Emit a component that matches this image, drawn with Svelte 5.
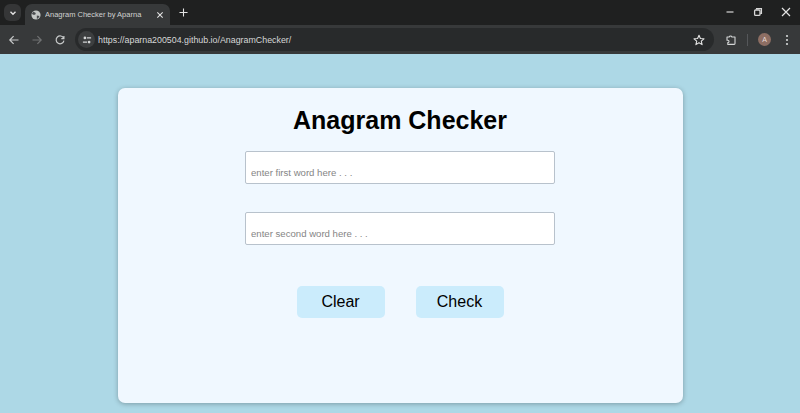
<script lang="ts">
  let first = $state('');
  let second = $state('');

  function clear() {
    first = '';
    second = '';
  }
</script>

<div class="window">
  <div class="tabstrip">
    <div class="tabsearch">
      <svg width="10" height="10" viewBox="0 0 10 10"><path d="M2.5 3.8 5 6.3l2.5-2.5" fill="none" stroke="#e3e3e3" stroke-width="1.4"/></svg>
    </div>
    <div class="tab">
      <svg class="globe" width="10" height="10" viewBox="0 0 12 12">
        <circle cx="6" cy="6" r="5.5" fill="#c4c7c5"/>
        <path d="M3 2.2 5.8 3.6 5 5.6 2.6 5.8 1 4.4ZM7 6.6l3.2.6-1.6 3-1.6.4Z" fill="#4a4c4f"/>
      </svg>
      <span class="tabtitle">Anagram Checker by Aparna</span>
      <svg class="tabclose" width="8" height="8" viewBox="0 0 9 9"><path d="M1.5 1.5l6 6M7.5 1.5l-6 6" stroke="#e3e3e3" stroke-width="1.2"/></svg>
    </div>
    <svg class="newtab" width="9" height="9" viewBox="0 0 10 10"><path d="M5 .5v9M.5 5h9" stroke="#e3e3e3" stroke-width="1.2"/></svg>
    <div class="winctl">
      <svg width="10" height="10" viewBox="0 0 10 10"><path d="M1.5 5h7" stroke="#d8d8d8" stroke-width="1.2"/></svg>
      <svg width="10" height="10" viewBox="0 0 10 10"><path d="M3.6 2.4V1.6h4.8v4.8H7.2" fill="none" stroke="#d8d8d8" stroke-width="1.3"/><rect x="1.6" y="3" width="5.4" height="5.4" rx="1" fill="none" stroke="#d8d8d8" stroke-width="1.3"/></svg>
      <svg width="10" height="10" viewBox="0 0 10 10"><path d="M1 1l8 8M9 1l-8 8" stroke="#e3e3e3" stroke-width="1.2"/></svg>
    </div>
  </div>

  <div class="toolbar">
    <svg class="nav" width="12" height="12" viewBox="0 0 12 12"><path d="M10.5 6H2M5.6 2.2 1.8 6l3.8 3.8" fill="none" stroke="#c8caca" stroke-width="1.2"/></svg>
    <svg class="nav" width="12" height="12" viewBox="0 0 12 12"><path d="M1.5 6H10M6.4 2.2 10.2 6 6.4 9.8" fill="none" stroke="#707273" stroke-width="1.2"/></svg>
    <svg class="nav" width="12" height="12" viewBox="0 0 12 12"><path d="M9.6 4.2A3.9 3.9 0 1 0 9.9 6.6M9.9 2V4.6H7.3" fill="none" stroke="#c8caca" stroke-width="1.2"/></svg>
    <div class="omnibox">
      <div class="siteinfo">
        <svg width="10" height="10" viewBox="0 0 11 11"><path d="M5.4 3.2H10M1 7.8h4.6" stroke="#d4d6d6" stroke-width="1.2"/><circle cx="3.2" cy="3.2" r="1.5" fill="#d4d6d6"/><circle cx="7.8" cy="7.8" r="1.5" fill="#d4d6d6"/></svg>
      </div>
      <span class="url">https://aparna200504.github.io/AnagramChecker/</span>
      <svg class="star" width="12" height="12" viewBox="0 0 12 12"><path d="M6 1.2 7.4 4.5l3.6.3-2.7 2.3.8 3.5L6 8.7l-3.1 1.9.8-3.5L1 4.8l3.6-.3Z" fill="none" stroke="#e3e3e3" stroke-width="1.1" stroke-linejoin="round"/></svg>
    </div>
    <svg class="ext" width="12" height="12" viewBox="0 0 12 12"><path d="M2 3h2.2a1.4 1.4 0 0 1 2.7 0H10v6.6a.8.8 0 0 1-.8.8H2.8V8.6a1.2 1.2 0 0 0 0-2.4H2Z" fill="none" stroke="#d4d6d6" stroke-width="1.1" stroke-linejoin="round"/></svg>
    <div class="divider"></div>
    <div class="avatar">A</div>
    <svg class="menu" width="4" height="12" viewBox="0 0 4 12"><circle cx="2" cy="2" r="1.1" fill="#d4d6d6"/><circle cx="2" cy="6" r="1.1" fill="#d4d6d6"/><circle cx="2" cy="10" r="1.1" fill="#d4d6d6"/></svg>
  </div>

  <main class="page">
    <section class="card">
      <h1>Anagram Checker</h1>
      <input type="text" placeholder="enter first word here . . ." bind:value={first} />
      <input type="text" placeholder="enter second word here . . ." bind:value={second} />
      <div class="buttons">
        <button onclick={clear}>Clear</button>
        <button>Check</button>
      </div>
    </section>
  </main>
</div>

<style>
  :global(body) {
    margin: 0;
    background: #add8e6;
  }

  .window {
    width: 800px;
    height: 413px;
    display: flex;
    flex-direction: column;
    overflow: hidden;
    font-family: "Liberation Sans", Arial, sans-serif;
  }

  /* Browser chrome */
  .tabstrip {
    height: 25px;
    flex: none;
    display: flex;
    align-items: flex-end;
    background: #1f2020;
    padding-left: 4px;
    box-sizing: border-box;
  }

  .tabsearch {
    width: 17px;
    height: 17px;
    margin-bottom: 4px;
    border-radius: 6px;
    background: #353637;
    display: flex;
    align-items: center;
    justify-content: center;
  }

  .tab {
    width: 145px;
    height: 21px;
    margin-left: 4px;
    padding: 0 6px 0 6px;
    box-sizing: border-box;
    display: flex;
    align-items: center;
    background: #37393a;
    border-radius: 7px 7px 0 0;
  }

  .globe {
    flex: none;
  }

  .tabtitle {
    margin-left: 4px;
    flex: 1;
    font-size: 7.5px;
    color: #d0d1d1;
    white-space: nowrap;
    overflow: hidden;
  }

  .newtab {
    margin: 0 0 8px 9px;
  }

  .winctl {
    margin-left: auto;
    display: flex;
    gap: 18px;
    padding-right: 9px;
    margin-bottom: 8px;
  }

  .toolbar {
    height: 29px;
    flex: none;
    display: flex;
    align-items: center;
    background: #37393a;
    padding: 0 11px 0 8px;
    box-sizing: border-box;
  }

  .nav {
    margin-right: 11px;
  }

  .nav:nth-child(3) {
    margin-right: 9px;
  }

  .omnibox {
    width: 639px;
    height: 23px;
    border-radius: 12px;
    background: #282a2b;
    display: flex;
    align-items: center;
    padding: 0 9px 0 3px;
    box-sizing: border-box;
  }

  .siteinfo {
    width: 17px;
    height: 17px;
    border-radius: 50%;
    background: #3d3f40;
    display: flex;
    align-items: center;
    justify-content: center;
  }

  .url {
    margin-left: 3px;
    font-size: 8.85px;
    color: #d6d7d7;
  }

  .star {
    margin-left: auto;
  }

  .ext {
    margin-left: 11px;
  }

  .divider {
    width: 1px;
    height: 12px;
    background: #55575a;
    margin-left: 10px;
  }

  .avatar {
    width: 13px;
    height: 13px;
    border-radius: 50%;
    background: #8d6e63;
    color: #e8dcd8;
    font-size: 7px;
    display: flex;
    align-items: center;
    justify-content: center;
    margin-left: 10px;
  }

  .menu {
    margin-left: 14px;
  }

  /* Page content */
  .page {
    flex: 1;
    background: #add8e6;
    display: flex;
    justify-content: center;
    padding-top: 34px;
    box-sizing: border-box;
    min-height: 0;
  }

  .card {
    width: 565px;
    height: 315px;
    border-radius: 7px;
    background: #f0f8ff;
    box-shadow: 0 1px 5px rgba(0, 0, 0, 0.28);
    display: flex;
    flex-direction: column;
    align-items: center;
    box-sizing: border-box;
    padding-top: 17px;
  }

  h1 {
    margin: 0;
    font-size: 25px;
    line-height: 31px;
    font-weight: 700;
    color: #000;
  }

  input {
    width: 310px;
    height: 33px;
    box-sizing: border-box;
    margin-top: 15px;
    padding: 10px 5px 0;
    border: 1px solid #b8c2cc;
    border-radius: 2px;
    background: #fff;
    font-family: inherit;
    font-size: 9.6px;
    outline: none;
  }

  input + input {
    margin-top: 28px;
  }

  input::placeholder {
    color: #858585;
    opacity: 1;
  }

  .buttons {
    display: flex;
    gap: 31px;
    margin-top: 41px;
  }

  button {
    width: 88px;
    height: 32px;
    border: none;
    border-radius: 5px;
    background: #cbecfc;
    color: #000;
    font-family: inherit;
    font-size: 16px;
    padding: 0;
  }
</style>
